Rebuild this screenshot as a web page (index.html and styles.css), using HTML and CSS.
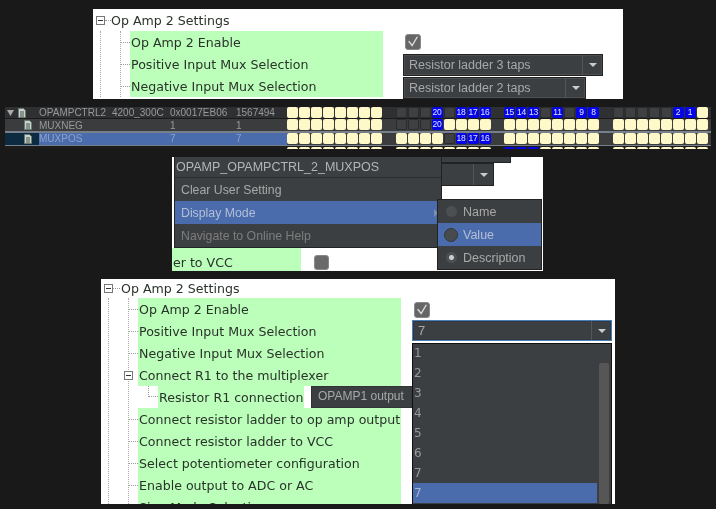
FILE: index.html
```html
<!DOCTYPE html>
<html lang="en">
<head>
<meta charset="utf-8">
<title>Op Amp 2 Settings</title>
<link rel="stylesheet" href="styles.css">
</head>
<body>
<section class="panel panel-top">
  <div class="tree-col">
    <div class="tree-head"><svg class="expander" viewBox="0 0 9 9"><rect x=".5" y=".5" width="8" height="8" fill="#fff" stroke="#777"/><path d="M2 4.5h5" stroke="#333"/></svg><span class="stub short"></span><span>Op Amp 2 Settings</span></div>
    <div class="branch"><div class="sub-branch">
      <div class="row"><span class="stub"></span><span class="label">Op Amp 2 Enable</span></div>
      <div class="row"><span class="stub"></span><span class="label">Positive Input Mux Selection</span></div>
      <div class="row"><span class="stub"></span><span class="label">Negative Input Mux Selection</span></div>
    </div></div>
  </div>
  <div class="controls">
    <span class="check"><svg viewBox="0 0 16 16"><path d="M3 7l4 5 6-10" fill="none" stroke="#ddd" stroke-width="1.6"/></svg></span>
    <div class="combo wide"><span class="combo-text">Resistor ladder 3 taps</span><span class="combo-btn"><svg class="caret" viewBox="0 0 8 4"><path d="M0 0h8L4 4z"/></svg></span></div>
    <div class="combo narrow"><span class="combo-text">Resistor ladder 2 taps</span><span class="combo-btn"><svg class="caret" viewBox="0 0 8 4"><path d="M0 0h8L4 4z"/></svg></span></div>
  </div>
</section>

<section class="panel-table">
  <div class="reg-row head">
    <span class="reg-tree"><svg class="twisty" viewBox="0 0 7 6"><path d="M0 0h7L3.5 6z"/></svg><svg class="doc" viewBox="0 0 8 10"><path d="M.5.5h5l2 2v7h-7z" fill="#c8d2cc" stroke="#6a7a70"/><path d="M2 4h4M2 6h4M2 8h4" stroke="#46564c"/></svg></span>
    <span>OPAMPCTRL2</span><span>4200_300C</span><span>0x0017EB06</span><span>1567494</span>
    <div class="bits">
      <div class="group"><i class="y"></i><i class="y"></i><i class="y"></i><i class="y"></i><i class="y"></i><i class="y"></i><i class="y"></i><i class="y"></i></div>
      <div class="group"><i class="d"></i><i class="d"></i><i class="d"></i><i class="b">20</i><i class="d"></i><i class="b">18</i><i class="b">17</i><i class="b">16</i></div>
      <div class="group"><i class="b">15</i><i class="b">14</i><i class="b">13</i><i class="d"></i><i class="b">11</i><i class="d"></i><i class="b">9</i><i class="b">8</i></div>
      <div class="group"><i class="d"></i><i class="d"></i><i class="d"></i><i class="d"></i><i class="d"></i><i class="b">2</i><i class="b">1</i><i class="y"></i></div>
    </div>
  </div>
  <div class="reg-row">
    <span class="reg-tree nested"><svg class="doc" viewBox="0 0 8 10"><path d="M.5.5h5l2 2v7h-7z" fill="#c8d2cc" stroke="#6a7a70"/><path d="M2 4h4M2 6h4M2 8h4" stroke="#46564c"/></svg></span>
    <span>MUXNEG</span><span></span><span>1</span><span>1</span>
    <div class="bits">
      <div class="group"><i class="y"></i><i class="y"></i><i class="y"></i><i class="y"></i><i class="y"></i><i class="y"></i><i class="y"></i><i class="y"></i></div>
      <div class="group"><i class="d"></i><i class="d"></i><i class="d"></i><i class="b">20</i><i class="y"></i><i class="y"></i><i class="y"></i><i class="y"></i></div>
      <div class="group"><i class="y"></i><i class="y"></i><i class="y"></i><i class="y"></i><i class="y"></i><i class="y"></i><i class="y"></i><i class="y"></i></div>
      <div class="group"><i class="y"></i><i class="y"></i><i class="y"></i><i class="y"></i><i class="y"></i><i class="y"></i><i class="y"></i><i class="y"></i></div>
    </div>
  </div>
  <div class="reg-row selected">
    <span class="reg-tree nested"><svg class="doc" viewBox="0 0 8 10"><path d="M.5.5h5l2 2v7h-7z" fill="#c8d2cc" stroke="#6a7a70"/><path d="M2 4h4M2 6h4M2 8h4" stroke="#46564c"/></svg></span>
    <span>MUXPOS</span><span></span><span>7</span><span>7</span>
    <div class="bits">
      <div class="group"><i class="y"></i><i class="y"></i><i class="y"></i><i class="y"></i><i class="y"></i><i class="y"></i><i class="y"></i><i class="y"></i></div>
      <div class="group"><i class="y"></i><i class="y"></i><i class="y"></i><i class="y"></i><i class="d"></i><i class="b">18</i><i class="b">17</i><i class="b">16</i></div>
      <div class="group"><i class="y"></i><i class="y"></i><i class="y"></i><i class="y"></i><i class="y"></i><i class="y"></i><i class="y"></i><i class="y"></i></div>
      <div class="group"><i class="y"></i><i class="y"></i><i class="y"></i><i class="y"></i><i class="y"></i><i class="y"></i><i class="y"></i><i class="y"></i></div>
    </div>
  </div>
  <div class="reg-row sliver">
    <span class="reg-tree nested"></span><span></span><span></span><span></span><span></span>
    <div class="bits">
      <div class="group"><i class="y"></i><i class="y"></i><i class="y"></i><i class="y"></i><i class="y"></i><i class="y"></i><i class="y"></i><i class="y"></i></div>
      <div class="group"><i class="y"></i><i class="y"></i><i class="y"></i><i class="y"></i><i class="y"></i><i class="y"></i><i class="y"></i><i class="y"></i></div>
      <div class="group"><i class="b"></i><i class="b"></i><i class="b"></i><i class="y"></i><i class="y"></i><i class="y"></i><i class="y"></i><i class="y"></i></div>
      <div class="group"><i class="y"></i><i class="y"></i><i class="y"></i><i class="y"></i><i class="y"></i><i class="y"></i><i class="y"></i><i class="y"></i></div>
    </div>
  </div>
</section>

<section class="panel panel-menu">
  <div class="behind-combo one"></div>
  <div class="behind-combo two"><span class="combo-btn"><svg class="caret" viewBox="0 0 8 4"><path d="M0 0h8L4 4z"/></svg></span></div>
  <div class="crop-row"><span class="crop-label">er to VCC</span><span class="check off"></span></div>
  <div class="menu">
    <div class="menu-title">OPAMP_OPAMPCTRL_2_MUXPOS</div>
    <div class="menu-item">Clear User Setting</div>
    <div class="menu-item active">Display Mode<svg class="menu-arrow" viewBox="0 0 4 8"><path d="M0 0l4 4-4 4z"/></svg></div>
    <div class="menu-item muted">Navigate to Online Help</div>
  </div>
  <div class="submenu">
    <div class="sub-item"><span class="radio"></span>Name</div>
    <div class="sub-item active"><span class="radio big"></span>Value</div>
    <div class="sub-item"><span class="radio on"></span>Description</div>
  </div>
</section>

<section class="panel panel-bottom">
  <div class="tree-head"><svg class="expander" viewBox="0 0 9 9"><rect x=".5" y=".5" width="8" height="8" fill="#fff" stroke="#777"/><path d="M2 4.5h5" stroke="#333"/></svg><span class="stub short"></span><span>Op Amp 2 Settings</span></div>
  <div class="branch"><div class="sub-branch">
    <div class="row"><span class="stub"></span><span class="label">Op Amp 2 Enable</span></div>
    <div class="row"><span class="stub"></span><span class="label">Positive Input Mux Selection</span></div>
    <div class="row"><span class="stub"></span><span class="label">Negative Input Mux Selection</span></div>
    <div class="row has-child"><svg class="expander inner" viewBox="0 0 9 9"><rect x=".5" y=".5" width="8" height="8" fill="#fff" stroke="#777"/><path d="M2 4.5h5" stroke="#333"/></svg><span class="label">Connect R1 to the multiplexer</span></div>
    <div class="row child"><span class="elbow"></span><span class="label fit">Resistor R1 connection</span></div>
    <div class="row"><span class="stub"></span><span class="label">Connect resistor ladder to op amp output</span></div>
    <div class="row"><span class="stub"></span><span class="label">Connect resistor ladder to VCC</span></div>
    <div class="row"><span class="stub"></span><span class="label">Select potentiometer configuration</span></div>
    <div class="row"><span class="stub"></span><span class="label">Enable output to ADC or AC</span></div>
    <div class="row"><span class="stub"></span><span class="label">Sine Mode Selection</span></div>
  </div></div>
  <span class="check floating"><svg viewBox="0 0 16 16"><path d="M3 7l4 5 6-10" fill="none" stroke="#ddd" stroke-width="1.6"/></svg></span>
  <div class="tooltip">OPAMP1 output</div>
  <div class="combo focused"><span class="combo-text">7</span><span class="combo-btn"><svg class="caret" viewBox="0 0 8 4"><path d="M0 0h8L4 4z"/></svg></span></div>
  <div class="dropdown">
    <div class="options">
      <div class="option">1</div><div class="option">2</div><div class="option">3</div><div class="option">4</div><div class="option">5</div><div class="option">6</div><div class="option">7</div><div class="option current">7</div>
    </div>
    <div class="scrollbar"><div class="thumb"></div></div>
  </div>
</section>
</body>
</html>
```
FILE: styles.css
```css
* { box-sizing: border-box; }
html, body { margin: 0; height: 509px; overflow: hidden; }
body {
  background: #191919;
  color: #2a332a;
  font-family: "DejaVu Sans", sans-serif;
  font-size: 12.6px;
  display: flex;
  flex-direction: column;
  align-items: flex-start;
}
svg { display: block; flex: none; }

.panel { background: #fff; position: relative; overflow: hidden; flex: none; filter: blur(.35px); }
.panel-top { margin: 9px 0 0 93px; width: 530px; height: 90px; display: flex; }
.panel-menu { margin: 8px 0 0 172px; width: 371px; height: 114px; padding-top: 91px; }
.panel-bottom { margin: 8px 0 0 101px; width: 514px; height: 225px; }

/* tree */
.tree-col { width: 290px; flex: none; }
.tree-head { height: 22px; display: flex; align-items: center; padding-left: 3px; }
.panel-top .stub.short { width: 6px; margin-right: 0; }
.panel-bottom .tree-head { height: 19px; }
.expander { width: 9px; height: 9px; }
.stub { width: 9px; flex: none; border-top: 1px dotted #999; }
.stub.short { width: 7px; margin-right: 1px; }
.branch { margin-left: 7px; border-left: 1px dotted #aaa; padding-left: 19px; }
.sub-branch { border-left: 1px dotted #aaa; }
.row { height: 22px; display: flex; align-items: stretch; }
.row .stub { align-self: center; }
.label { flex: 1; display: flex; align-items: center; background: #bbffbb; white-space: nowrap; padding-left: 1px; }
.panel-top .sub-branch { width: 263px; }
.panel-bottom .sub-branch { width: 273px; }
.has-child { margin-left: -5px; position: relative; }
.has-child .expander.inner { align-self: center; margin-right: 5px; }
.child { margin-left: 19px; }
.elbow { width: 10px; flex: none; height: 11px; border-left: 1px dotted #999; border-bottom: 1px dotted #999; }
.label.fit { flex: none; }

/* controls */
.controls { margin-left: 20px; padding-top: 25px; width: 210px; }
.check {
  display: block; width: 16px; height: 16px; margin-left: 2px; margin-bottom: 4px;
  background: #666; border: 1px solid #888; border-radius: 3px;
}
.check.off { margin: 0 0 1px 13px; width: 15px; height: 15px; background: #6a6a6a; align-self: flex-end; }
.check.floating { position: absolute; left: 313px; top: 23px; margin: 0; }
.combo {
  height: 22px; margin-bottom: 1px; display: flex; align-items: stretch;
  background: #3c3f41; border: 1px solid #222; box-shadow: inset 0 0 0 1px #4c4f51;
  color: #a8a8a8; font-family: "Liberation Sans", sans-serif; font-size: 12.5px;
}
.combo.wide { width: 200px; }
.combo.narrow { width: 183px; }
.combo-text { flex: 1; padding-left: 5px; display: flex; align-items: center; }
.combo-btn { width: 20px; display: flex; align-items: center; justify-content: center; border-left: 1px solid #555; }
.caret { width: 8px; height: 4px; fill: #ccc; }
.combo.focused { position: absolute; left: 311px; top: 41px; width: 200px; height: 21px; margin: 0; border: 1px solid #4a7eb5; box-shadow: inset 0 0 0 1px #2f3a44; font-size: 13px; }

/* register table */
.panel-table { margin: 8px 0 0 5px; width: 706px; height: 42px; background: #2e3032; flex: none; overflow: hidden; color: #999; font-family: "Liberation Sans", sans-serif; font-size: 10px; filter: blur(.35px); }
.reg-row { display: grid; grid-template-columns: 34px 73px 58px 66px 51px 1fr; height: 13px; align-items: center; background: #3a3c3e; border-bottom: 1px solid #77808a; white-space: nowrap; }
.reg-row.head { height: 12px; background: #2e3032; border-bottom: 1px solid #1a1a1a; }
.reg-row.selected { height: 14px; background: #3a3c3e; border-top: 1px solid #77808a; }
.reg-row.selected > span:not(.reg-tree) { background: #4a6cad; align-self: stretch; line-height: 12px; color: #8ea2c8; }
.reg-row.selected .reg-tree { background: #0c2a40; align-self: stretch; }
.reg-row.sliver { background: #1c1c1c; border: 0; height: 3px; padding-top: 1px; }
.reg-tree { display: flex; align-items: center; padding-left: 2px; gap: 4px; height: 100%; width: 34px; }
.reg-tree.nested { padding-left: 19px; }
.twisty { width: 7px; height: 6px; fill: #aaa; }
.doc { width: 8px; height: 10px; }
.bits { display: flex; gap: 13.5px; align-self: stretch; }
.group { display: flex; gap: 1px; }
.group i {
  width: 11px; height: 11px; border-radius: 2px; font-style: normal;
  font-size: 8.5px; line-height: 11px; text-align: center; color: #dfe6ff; letter-spacing: -.2px;
}
.group .y { background: #fff8c8; }
.group .d { background: #3e4042; border: 1px solid #2a2c2e; }
.group .b { background: #0505e8; }

/* context menu */
.crop-row { display: flex; height: 23px; align-items: stretch; }
.crop-label { width: 129px; display: flex; align-items: center; background: #bbffbb; padding: 6px 0 0 1px; }
.behind-combo { position: absolute; background: #3c3f41; border: 1px solid #222; }
.behind-combo.one { left: 260px; top: -16px; width: 79px; height: 22px; }
.behind-combo.two { left: 260px; top: 6px; width: 62px; height: 23px; display: flex; justify-content: flex-end; }
.menu {
  position: absolute; left: 2px; top: 0; width: 268px; height: 91px;
  background: #3c3f41; border: 1px solid #222; border-top: 0;
  font-family: "Liberation Sans", sans-serif; font-size: 12.3px; color: #a8a8a8;
}
.menu-title { height: 21px; display: flex; align-items: center; padding-left: 1px; border-bottom: 1px solid #2a2c2e; font-size: 12.5px; color: #b4b4b4; }
.menu-item { height: 23px; display: flex; align-items: center; padding-left: 6px; }
.menu-item.active { background: #4a6cad; color: #b4bfd6; position: relative; }
.menu-item.muted { color: #7d7d7d; }
.menu-arrow { position: absolute; right: 3px; top: 8px; width: 4px; height: 8px; fill: #7b8eb5; }
.submenu {
  position: absolute; left: 265px; top: 42px; width: 105px; height: 71px;
  background: #3c3f41; border: 1px solid #222;
  font-family: "Liberation Sans", sans-serif; font-size: 12.5px; color: #a8a8a8;
}
.sub-item { height: 23px; display: flex; align-items: center; gap: 6px; padding-left: 8px; }
.sub-item.active { background: #4a6cad; color: #b4bfd6; }
.radio { width: 11px; height: 11px; border-radius: 50%; background: #4c4f51; flex: none; }
.radio.big { width: 14px; height: 14px; margin-left: -2px; margin-right: -1px; background: #484b4d; border: 1px solid #35383a; }
.radio.on { background: radial-gradient(circle, #ccc 0 2px, #4c4f51 3px); }

/* popup pieces */
.tooltip {
  position: absolute; left: 210px; top: 107px; width: 102px; height: 22px;
  background: #3c3f41; color: #a8a8a8; border: 1px solid #333;
  font-family: "Liberation Sans", sans-serif; font-size: 12px; padding-left: 6px; line-height: 19px;
}
.dropdown {
  position: absolute; left: 311px; top: 64px; width: 200px; height: 161px;
  background: #3c3f41; border: 1px solid #111; border-bottom: 0; display: flex;
  font-family: "DejaVu Sans", sans-serif; font-size: 12px; color: #9a9a9a;
}
.options { flex: 1; margin-top: -1px; }
.option { height: 20px; line-height: 20px; padding-left: 1px; }
.option.current { height: 20px; background: #4a6cad; color: #a8b6d4; margin-right: 1px; }
.scrollbar { width: 13px; padding: 19px 2px 0 1px; }
.thumb { background: #565656; height: 141px; border-radius: 2px; }
```
